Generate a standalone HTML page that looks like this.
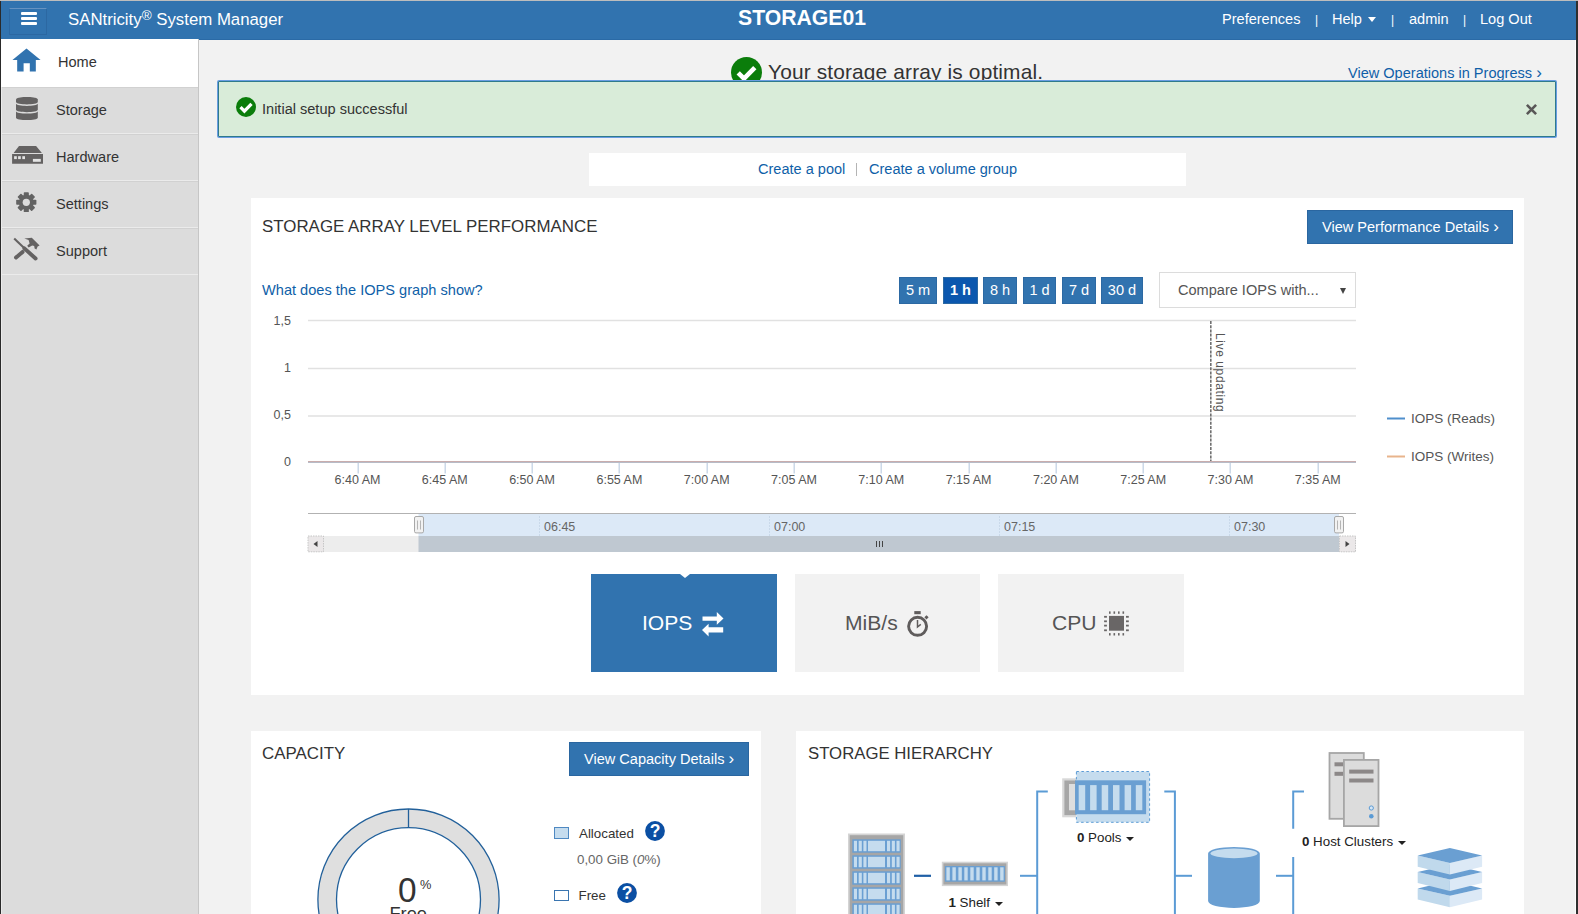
<!DOCTYPE html>
<html lang="en">
<head>
<meta charset="utf-8">
<title>SANtricity System Manager</title>
<style>
*{box-sizing:border-box;margin:0;padding:0}
html,body{width:1578px;height:914px;overflow:hidden;background:#f2f2f2;font-family:"Liberation Sans",sans-serif;color:#333;font-size:14px}
.abs{position:absolute}
#frame-top{left:0;top:0;width:1578px;height:1px;background:#bdbdbd}
#frame-left{left:0;top:1px;width:1px;height:913px;background:#2a2a2a}
#frame-right{left:1576px;top:1px;width:2px;height:913px;background:#2f2f2f}
#frame-right-w{left:1575px;top:40px;width:1px;height:874px;background:#fdfdfd}
#hdr{left:1px;top:1px;width:1575px;height:39px;background:#3173af;color:#fff}
#hdr-line{left:199px;top:39px;width:1376px;height:1px;background:#2a6aa6}
#burger{left:8px;top:7px;width:38px;height:27px;border:1px solid #2c68a2;border-top-color:#6592c1}
#burger i{position:absolute;left:11px;width:16px;height:3px;background:#fff;border-radius:1px}
#brand{left:67px;top:9px;font-size:16.8px;white-space:nowrap}
#brand sup{font-size:13.5px;position:relative;top:-5px;vertical-align:baseline;line-height:0}
#sysname{left:737px;top:5px;font-size:21.2px;font-weight:bold;white-space:nowrap}
.hl{top:10px;font-size:14.55px;white-space:nowrap}
.sep{top:12px;font-size:12px}
#side{left:1px;top:39px;width:197px;height:875px;background:#dcdcdc}
#side-b{left:198px;top:39px;width:1px;height:875px;background:#c6c6c6}
.nav{left:0;width:197px;height:47px;border-bottom:1px solid #ebebeb;border-top:1px solid #d1d1d1;font-size:14.55px;color:#333}
.nav span{position:absolute;left:55px;top:14px}
.nav.on{background:#fff;border-color:#fff;height:48px}
.nav svg{position:absolute}
.link{color:#0f5fa8}
.panel{background:#fff}
.ptitle{font-size:16.9px;color:#333;letter-spacing:0px;white-space:nowrap}
.btn{background:#3173af;color:#fff;font-size:14.55px;white-space:nowrap;border:1px solid #2a66a0}
.tb{top:277px;height:27px;background:#3173af;color:#fff;font-size:14.55px;text-align:center;line-height:26.6px;white-space:nowrap;box-shadow:inset 0 0 0 1px #2c69a3}
.hl2{font-size:13.33px;color:#222;white-space:nowrap}
.car{display:inline-block;width:0;height:0;border-left:4px solid transparent;border-right:4px solid transparent;border-top:4.5px solid #222;margin-left:5px;vertical-align:1px}
.lg{font-size:13.33px;color:#333;white-space:nowrap}
.tabt{font-size:21.1px;color:#555;white-space:nowrap}
.chev{font-size:17px}
.ax{font-size:12.5px;fill:#555;font-family:"Liberation Sans",sans-serif}
</style>
</head>
<body>
<!-- header -->
<div class="abs" id="hdr">
  <div class="abs" id="burger"><i style="top:3px"></i><i style="top:8px"></i><i style="top:13px"></i></div>
  <div class="abs" id="brand">SANtricity<sup>®</sup> System Manager</div>
  <div class="abs" id="sysname">STORAGE01</div>
  <div class="abs hl" style="left:1221px">Preferences</div>
  <div class="abs sep" style="left:1314px">|</div>
  <div class="abs hl" style="left:1331px">Help</div>
  <div class="abs" style="left:1367px;top:16px;width:0;height:0;border-left:4px solid transparent;border-right:4px solid transparent;border-top:5px solid #fff"></div>
  <div class="abs sep" style="left:1390px">|</div>
  <div class="abs hl" style="left:1408px">admin</div>
  <div class="abs sep" style="left:1462px">|</div>
  <div class="abs hl" style="left:1479px">Log Out</div>
</div>
<div class="abs" id="hdr-line"></div>

<!-- sidebar -->
<div class="abs" id="side">
  <div class="abs nav on" style="top:0"><span style="left:57px;top:14px">Home</span>
    <svg style="left:11px;top:8.2px" width="29" height="24" viewBox="0 0 28 24" preserveAspectRatio="none"><path fill="#3173af" d="M14 0.6 L27.6 12 H23 V23.4 H17.2 V15.2 H11.2 V23.4 H5 V12 H0.4 Z"/></svg>
  </div>
  <div class="abs nav" style="top:48px"><span style="top:13.5px">Storage</span>
    <svg style="left:14.7px;top:8.5px" width="22" height="24" viewBox="0 0 22 24"><g fill="#646262"><path d="M0 2.6 C0 -0.9 21.8 -0.9 21.8 2.6 V5.1 C21.8 8.3 0 8.3 0 5.1 Z"/><path d="M0 6.5 C0 9.7 21.8 9.7 21.8 6.5 V12.8 C21.8 16.0 0 16.0 0 12.8 Z"/><path d="M0 14.2 C0 17.4 21.8 17.4 21.8 14.2 V20.7 C21.8 23.9 0 23.9 0 20.7 Z"/></g></svg>
  </div>
  <div class="abs nav" style="top:95px"><span>Hardware</span>
    <svg style="left:11px;top:11px" width="32" height="19" viewBox="0 0 32 19"><path fill="#646262" d="M7 0.1 H24.1 L29.9 6.9 H1.6 Z M0.1 7.9 H31 V17.8 H0.1 Z"/><g fill="#e4e4e4"><rect x="2.1" y="10.2" width="2.7" height="2.9"/><rect x="6.1" y="10.2" width="2.7" height="2.9"/><rect x="10.3" y="10.2" width="2.7" height="2.9"/><rect x="20.9" y="12.9" width="7.9" height="2.9"/></g></svg>
  </div>
  <div class="abs nav" style="top:142px"><span>Settings</span>
    <svg style="left:15.2px;top:9.7px" width="20.6" height="20.6" viewBox="-10.5 -10.5 21 21"><g fill="#636363"><g id="teeth"><rect x="-2.6" y="-10.3" width="5.2" height="20.6" rx="0.8"/><rect x="-2.6" y="-10.3" width="5.2" height="20.6" rx="0.8" transform="rotate(45)"/><rect x="-2.6" y="-10.3" width="5.2" height="20.6" rx="0.8" transform="rotate(90)"/><rect x="-2.6" y="-10.3" width="5.2" height="20.6" rx="0.8" transform="rotate(135)"/></g><circle r="7.6"/></g><circle r="3.7" fill="#dcdcdc"/></svg>
  </div>
  <div class="abs nav" style="top:189px"><span>Support</span>
    <svg style="left:12px;top:8px" width="28" height="25" viewBox="0 0 28 25"><g fill="none" stroke="#646262"><path d="M1.2 1.6 L10.6 10.6" stroke-width="2.1"/><path d="M11.4 11.4 L22.6 21.5" stroke-width="3.9" stroke-linecap="round"/><path d="M3 20.6 L9.6 14.9" stroke-width="3.9" stroke-linecap="round"/></g><path fill="#646262" d="M11.3 1.5 L18.8 0.8 L26.6 8.6 L24.6 9.6 L23.4 12.4 L21.6 11.4 L21.2 9 L19.2 8.4 L15.6 10.6 L14.2 8.8 L16.6 6.4 L15.6 2.9 Z"/></svg>
  </div>
</div>
<div class="abs" id="side-b"></div>
<div class="abs" style="left:1px;top:87px;width:1px;height:827px;background:#ebebeb"></div>

<!-- status -->
<div class="abs" id="status" style="left:768px;top:60px;font-size:20.9px;letter-spacing:0.14px;color:#333;white-space:nowrap">Your storage array is optimal.</div>
<div class="abs link" id="ops" style="left:1348px;top:63px;font-size:14.55px;white-space:nowrap">View Operations in Progress <span class="chev">›</span></div>

<svg class="abs" id="chk2" style="left:731px;top:57px" width="31" height="24" viewBox="0 0 31 24"><circle cx="15.5" cy="15.5" r="15.5" fill="#0b7d0b"/><path d="M7.2 15.8 L13 21.6 L23.8 10.6" fill="none" stroke="#fff" stroke-width="4.6"/></svg>
<!-- notification -->
<div class="abs" id="notif" style="left:218px;top:81px;width:1338px;height:56px;background:#d9ecd9;border:1px solid #2f7a8c;box-shadow:0 0 0 1px #6a9de2;border-radius:1px">
  <div class="abs" style="left:43px;top:19px;font-size:14.55px;color:#333;white-space:nowrap">Initial setup successful</div>
  <svg class="abs" style="left:1306px;top:20.5px" width="13" height="13" viewBox="0 0 13 13"><path d="M1.9 1.9 L11.1 11.1 M11.1 1.9 L1.9 11.1" stroke="#595757" stroke-width="2.6" fill="none"/></svg>
</div>

<svg class="abs" id="chk1" style="left:236px;top:97px" width="20" height="20" viewBox="0 0 20 20"><circle cx="10" cy="10" r="10" fill="#0b7d0b"/><path d="M4.5 10.2 L8.4 14.1 L15.5 6.8" fill="none" stroke="#fff" stroke-width="3.3"/></svg>
<!-- create links -->
<div class="abs panel" id="links" style="left:589px;top:153px;width:597px;height:33px">
  <div class="abs link" style="left:169px;top:7.6px;font-size:14.55px;white-space:nowrap">Create a pool</div>
  <div class="abs" style="left:267px;top:10px;width:1px;height:13px;background:#b4b4b4"></div>
  <div class="abs link" style="left:280px;top:7.6px;font-size:14.55px;white-space:nowrap">Create a volume group</div>
</div>

<!-- performance panel -->
<div class="abs panel" id="perf" style="left:251px;top:198px;width:1273px;height:497px"></div>
<div class="abs ptitle" id="t-perf" style="left:262px;top:217px">STORAGE ARRAY LEVEL PERFORMANCE</div>
<div class="abs btn" id="b-perf" style="left:1307px;top:210px;width:206px;height:34px;line-height:32px;padding-left:14px">View Performance Details <span class="chev">›</span></div>
<div class="abs link" id="q-iops" style="left:262px;top:282px;font-size:14.6px;white-space:nowrap">What does the IOPS graph show?</div>
<div class="abs tb" style="left:899px;width:38px">5 m</div>
<div class="abs tb" style="left:943px;width:35px;background:#0b57ae;font-weight:bold">1 h</div>
<div class="abs tb" style="left:983px;width:34px">8 h</div>
<div class="abs tb" style="left:1023px;width:33px">1 d</div>
<div class="abs tb" style="left:1062px;width:34px">7 d</div>
<div class="abs tb" style="left:1101px;width:42px">30 d</div>
<div class="abs" id="sel" style="left:1159px;top:272px;width:197px;height:36px;background:#fff;border:1px solid #dcdcdc;font-size:14.55px;color:#555;line-height:34px;padding-left:18px;white-space:nowrap">Compare IOPS with...<i style="position:absolute;left:180px;top:14.5px;width:0;height:0;border-left:3.8px solid transparent;border-right:3.8px solid transparent;border-top:6.5px solid #444"></i></div>
<svg class="abs" id="chart" style="left:0;top:0" width="1578" height="914" viewBox="0 0 1578 914">
<path d="M308 320.6 H1356" stroke="#e1e1e1" stroke-width="1.5"/>
<path d="M308 368.4 H1356" stroke="#e1e1e1" stroke-width="1.5"/>
<path d="M308 415.9 H1356" stroke="#e1e1e1" stroke-width="1.5"/>
<path d="M358.2 463 V473.4" stroke="#c3d2e4" stroke-width="1.3"/>
<path d="M445.2 463 V473.4" stroke="#c3d2e4" stroke-width="1.3"/>
<path d="M532.2 463 V473.4" stroke="#c3d2e4" stroke-width="1.3"/>
<path d="M619.2 463 V473.4" stroke="#c3d2e4" stroke-width="1.3"/>
<path d="M707.2 463 V473.4" stroke="#c3d2e4" stroke-width="1.3"/>
<path d="M794.2 463 V473.4" stroke="#c3d2e4" stroke-width="1.3"/>
<path d="M881.2 463 V473.4" stroke="#c3d2e4" stroke-width="1.3"/>
<path d="M969.2 463 V473.4" stroke="#c3d2e4" stroke-width="1.3"/>
<path d="M1056.2 463 V473.4" stroke="#c3d2e4" stroke-width="1.3"/>
<path d="M1143.2 463 V473.4" stroke="#c3d2e4" stroke-width="1.3"/>
<path d="M1230.2 463 V473.4" stroke="#c3d2e4" stroke-width="1.3"/>
<path d="M1318.2 463 V473.4" stroke="#c3d2e4" stroke-width="1.3"/>
<path d="M308 461.5 H1356" stroke="#c9adad" stroke-width="1"/><path d="M308 462.5 H1356" stroke="#b7bcc8" stroke-width="1"/>
<path d="M1210.8 321 V461" stroke="#707070" stroke-width="1.6" stroke-dasharray="3 1.2"/>
<text class="ax" transform="translate(1215.5 333) rotate(90)" style="font-size:12px;letter-spacing:0.6px;fill:#555">Live updating</text>
<text class="ax" x="291" y="325" text-anchor="end">1,5</text>
<text class="ax" x="291" y="372" text-anchor="end">1</text>
<text class="ax" x="291" y="419" text-anchor="end">0,5</text>
<text class="ax" x="291" y="466" text-anchor="end">0</text>
<text class="ax" x="357.5" y="484" text-anchor="middle">6:40 AM</text>
<text class="ax" x="444.8" y="484" text-anchor="middle">6:45 AM</text>
<text class="ax" x="532.1" y="484" text-anchor="middle">6:50 AM</text>
<text class="ax" x="619.4" y="484" text-anchor="middle">6:55 AM</text>
<text class="ax" x="706.7" y="484" text-anchor="middle">7:00 AM</text>
<text class="ax" x="794.0" y="484" text-anchor="middle">7:05 AM</text>
<text class="ax" x="881.3" y="484" text-anchor="middle">7:10 AM</text>
<text class="ax" x="968.6" y="484" text-anchor="middle">7:15 AM</text>
<text class="ax" x="1055.9" y="484" text-anchor="middle">7:20 AM</text>
<text class="ax" x="1143.1999999999998" y="484" text-anchor="middle">7:25 AM</text>
<text class="ax" x="1230.5" y="484" text-anchor="middle">7:30 AM</text>
<text class="ax" x="1317.8" y="484" text-anchor="middle">7:35 AM</text>
<path d="M1387 418.5 H1405" stroke="#4f8fcc" stroke-width="2"/>
<path d="M1387 456.5 H1405" stroke="#e8b48c" stroke-width="2"/>
<text class="ax" x="1411" y="423" style="font-size:13.5px;fill:#555">IOPS (Reads)</text>
<text class="ax" x="1411" y="461" style="font-size:13.5px;fill:#555">IOPS (Writes)</text>
<rect x="418.5" y="514" width="920.5" height="22" fill="#dce9f7"/>
<path d="M308 513.5 H1356" stroke="#b2b2b2" stroke-width="1.2"/>
<path d="M539.5 516 V536" stroke="#c9d9ea" stroke-width="1" stroke-dasharray="2 1"/>
<text class="ax" x="544" y="531" style="fill:#666">06:45</text>
<path d="M769.5 516 V536" stroke="#c9d9ea" stroke-width="1" stroke-dasharray="2 1"/>
<text class="ax" x="774" y="531" style="fill:#666">07:00</text>
<path d="M999.5 516 V536" stroke="#c9d9ea" stroke-width="1" stroke-dasharray="2 1"/>
<text class="ax" x="1004" y="531" style="fill:#666">07:15</text>
<path d="M1229.5 516 V536" stroke="#c9d9ea" stroke-width="1" stroke-dasharray="2 1"/>
<text class="ax" x="1234" y="531" style="fill:#666">07:30</text>
<rect x="308" y="536" width="1048" height="16" fill="#ededed"/>
<rect x="418.5" y="536" width="920.5" height="16" fill="#bfc8d1"/>
<rect x="308" y="536" width="15.5" height="15.8" fill="#ebe8e9" stroke="#c6c6c6" stroke-dasharray="1.5 1"/>
<rect x="1339.5" y="536" width="16" height="15.8" fill="#ebe8e9" stroke="#c6c6c6" stroke-dasharray="1.5 1"/>
<path d="M317.5 541 L313.5 544 L317.5 547 Z" fill="#444"/>
<path d="M1345.5 541 L1349.5 544 L1345.5 547 Z" fill="#444"/>

<path d="M876.5 541 V547 M879.5 541 V547 M882.5 541 V547" stroke="#444" stroke-width="1"/>
<rect x="414.5" y="516.5" width="9" height="16.4" rx="1.5" fill="#f2f2f2" stroke="#a8a8a8"/>
<path d="M417.5 520.5 V529.5 M420.5 520.5 V529.5" stroke="#b5b5b5" stroke-width="1"/>
<rect x="1334.5" y="516.5" width="9" height="16.4" rx="1.5" fill="#f2f2f2" stroke="#a8a8a8"/>
<path d="M1337.5 520.5 V529.5 M1340.5 520.5 V529.5" stroke="#b5b5b5" stroke-width="1"/>
</svg>
<div class="abs" id="tab1" style="left:591px;top:574px;width:186px;height:98px;background:#3173af"></div>
<div class="abs" style="left:679.5px;top:574px;width:0;height:0;border-left:5px solid transparent;border-right:5px solid transparent;border-top:4.4px solid #fff"></div>
<div class="abs" id="tab2" style="left:795px;top:574px;width:185px;height:98px;background:#f2f2f2"></div>
<div class="abs" id="tab3" style="left:998px;top:574px;width:186px;height:98px;background:#f2f2f2"></div>
<svg class="abs" id="ic-ex" style="left:700px;top:610px" width="26" height="28" viewBox="700 610 26 28"><g fill="#fff"><path d="M702.5 616.4 H716.8 V612 L723.5 618.5 L716.8 624.8 V620.8 H702.5 Z"/><path d="M723.2 627.2 H708.6 V623.8 L702 629.9 L708.6 636.6 V632.4 H723.2 Z"/></g></svg>
<svg class="abs" id="ic-sw" style="left:905px;top:609px" width="26" height="30" viewBox="905 609 26 30"><circle cx="917.6" cy="626.3" r="9" fill="none" stroke="#5f5c5c" stroke-width="2.9"/><rect x="914.3" y="611.1" width="6.4" height="3.1" fill="#5f5c5c"/><path d="M926.5 615.2 L928.6 617.3 L926.5 619.4 L924.4 617.3 Z" fill="#5f5c5c"/><path d="M917.5 620 V627 L920.8 624.4" fill="none" stroke="#5f5c5c" stroke-width="1.5"/></svg>
<svg class="abs" id="ic-cpu" style="left:1102px;top:609px" width="30" height="30" viewBox="1102 609 30 30"><g fill="#696666"><rect x="1109" y="615.9" width="15" height="14.8"/><rect x="1109" y="611.4" width="1.6" height="2.4"/><rect x="1109" y="633.1" width="1.6" height="2.4"/><rect x="1113.5" y="611.4" width="1.6" height="2.4"/><rect x="1113.5" y="633.1" width="1.6" height="2.4"/><rect x="1118" y="611.4" width="1.6" height="2.4"/><rect x="1118" y="633.1" width="1.6" height="2.4"/><rect x="1122.5" y="611.4" width="1.6" height="2.4"/><rect x="1122.5" y="633.1" width="1.6" height="2.4"/><rect x="1104.1" y="615.9" width="2.8" height="1.8"/><rect x="1126" y="615.9" width="2.8" height="1.8"/><rect x="1104.1" y="620.4" width="2.8" height="1.8"/><rect x="1126" y="620.4" width="2.8" height="1.8"/><rect x="1104.1" y="624.7" width="2.8" height="1.8"/><rect x="1126" y="624.7" width="2.8" height="1.8"/><rect x="1104.1" y="629.4" width="2.8" height="1.8"/><rect x="1126" y="629.4" width="2.8" height="1.8"/></g></svg>
<div class="abs tabt" id="tt1" style="left:642px;top:611px;color:#fff">IOPS</div>
<div class="abs tabt" id="tt2" style="left:845px;top:611px">MiB/s</div>
<div class="abs tabt" id="tt3" style="left:1052px;top:611px">CPU</div>


<!-- capacity panel -->
<div class="abs panel" id="cap" style="left:251px;top:731px;width:510px;height:183px"></div>
<div class="abs ptitle" id="t-cap" style="left:262px;top:744px">CAPACITY</div>
<div class="abs btn" id="b-cap" style="left:569px;top:742px;width:180px;height:34px;line-height:32px;padding-left:14px">View Capacity Details <span class="chev">›</span></div>
<svg class="abs" id="donut" style="left:308px;top:800px" width="200" height="114" viewBox="308 800 200 114">
  <circle cx="408.5" cy="899.6" r="81.5" fill="none" stroke="#dfdfdf" stroke-width="18"/>
  <circle cx="408.5" cy="899.6" r="90.6" fill="none" stroke="#22609a" stroke-width="1.3"/>
  <circle cx="408.5" cy="899.6" r="72" fill="none" stroke="#22609a" stroke-width="1.3"/>
  <path d="M408.5 809 V827.6" stroke="#22609a" stroke-width="1.3"/>
</svg>
<div class="abs" id="zero" style="left:398px;top:870.3px;font-size:35.5px;color:#333;line-height:40px;transform:scaleX(0.94);transform-origin:0 0">0</div>
<div class="abs" id="pct" style="left:420px;top:877px;font-size:12.8px;color:#333">%</div>
<div class="abs" id="freebig" style="left:389.5px;top:903.5px;font-size:18.2px;color:#333;white-space:nowrap">Free</div>
<div class="abs" style="left:554px;top:827px;width:15px;height:12px;background:#c5dcee;border:1px solid #4f89c2"></div>
<div class="abs lg" id="lg1" style="left:579px;top:826px">Allocated</div>
<div class="abs" id="lgv" style="left:577px;top:851.6px;font-size:13.33px;color:#666;white-space:nowrap">0,00 GiB (<i>0</i>%)</div>
<div class="abs" style="left:554px;top:890px;width:15px;height:11px;background:#fff;border:1px solid #3a75b0"></div>
<div class="abs lg" id="lg2" style="left:578.5px;top:888px">Free</div>
<svg class="abs" style="left:645px;top:821px" width="20" height="20" viewBox="0 0 20 20"><circle cx="10" cy="10" r="9.9" fill="#0b4fa3"/><text x="10" y="16.4" text-anchor="middle" font-family="Liberation Sans, sans-serif" font-weight="bold" font-size="17.5" fill="#fff">?</text></svg>
<svg class="abs" style="left:617px;top:883px" width="20" height="20" viewBox="0 0 20 20"><circle cx="10" cy="10" r="9.9" fill="#0b4fa3"/><text x="10" y="16.4" text-anchor="middle" font-family="Liberation Sans, sans-serif" font-weight="bold" font-size="17.5" fill="#fff">?</text></svg>


<!-- hierarchy panel -->
<div class="abs panel" id="hier" style="left:796px;top:731px;width:728px;height:183px"></div>
<div class="abs ptitle" id="t-hier" style="left:808px;top:744px;font-size:16.75px">STORAGE HIERARCHY</div>
<svg class="abs" id="hsvg" style="left:796px;top:731px" width="728" height="183" viewBox="796 731 728 183">
<rect x="848" y="833.5" width="57" height="90" fill="#d4d4d4"/>
<rect x="849.7" y="835.2" width="53.6" height="90" fill="#a6a6a6"/>
<rect x="852.3" y="839.3" width="48.4" height="13.4" fill="#6a9fd2"/>
<rect x="853.9" y="840.8" width="3.1" height="10.4" fill="#c5dcee"/>
<rect x="858.7" y="840.8" width="3.1" height="10.4" fill="#c5dcee"/>
<rect x="863.4" y="840.8" width="3.1" height="10.4" fill="#c5dcee"/>
<rect x="868" y="840.8" width="17" height="10.4" fill="#c5dcee"/>
<rect x="887" y="840.8" width="3.1" height="10.4" fill="#c5dcee"/>
<rect x="891.8" y="840.8" width="3.1" height="10.4" fill="#c5dcee"/>
<rect x="896.5" y="840.8" width="3.1" height="10.4" fill="#c5dcee"/>
<rect x="852.3" y="855.3" width="48.4" height="13.4" fill="#6a9fd2"/>
<rect x="853.9" y="856.8" width="3.1" height="10.4" fill="#c5dcee"/>
<rect x="858.7" y="856.8" width="3.1" height="10.4" fill="#c5dcee"/>
<rect x="863.4" y="856.8" width="3.1" height="10.4" fill="#c5dcee"/>
<rect x="868" y="856.8" width="17" height="10.4" fill="#c5dcee"/>
<rect x="887" y="856.8" width="3.1" height="10.4" fill="#c5dcee"/>
<rect x="891.8" y="856.8" width="3.1" height="10.4" fill="#c5dcee"/>
<rect x="896.5" y="856.8" width="3.1" height="10.4" fill="#c5dcee"/>
<rect x="852.3" y="871.3" width="48.4" height="13.4" fill="#6a9fd2"/>
<rect x="853.9" y="872.8" width="3.1" height="10.4" fill="#c5dcee"/>
<rect x="858.7" y="872.8" width="3.1" height="10.4" fill="#c5dcee"/>
<rect x="863.4" y="872.8" width="3.1" height="10.4" fill="#c5dcee"/>
<rect x="868" y="872.8" width="17" height="10.4" fill="#c5dcee"/>
<rect x="887" y="872.8" width="3.1" height="10.4" fill="#c5dcee"/>
<rect x="891.8" y="872.8" width="3.1" height="10.4" fill="#c5dcee"/>
<rect x="896.5" y="872.8" width="3.1" height="10.4" fill="#c5dcee"/>
<rect x="852.3" y="887.3" width="48.4" height="13.4" fill="#6a9fd2"/>
<rect x="853.9" y="888.8" width="3.1" height="10.4" fill="#c5dcee"/>
<rect x="858.7" y="888.8" width="3.1" height="10.4" fill="#c5dcee"/>
<rect x="863.4" y="888.8" width="3.1" height="10.4" fill="#c5dcee"/>
<rect x="868" y="888.8" width="17" height="10.4" fill="#c5dcee"/>
<rect x="887" y="888.8" width="3.1" height="10.4" fill="#c5dcee"/>
<rect x="891.8" y="888.8" width="3.1" height="10.4" fill="#c5dcee"/>
<rect x="896.5" y="888.8" width="3.1" height="10.4" fill="#c5dcee"/>
<rect x="852.3" y="903.3" width="48.4" height="13.4" fill="#6a9fd2"/>
<rect x="853.9" y="904.8" width="3.1" height="10.4" fill="#c5dcee"/>
<rect x="858.7" y="904.8" width="3.1" height="10.4" fill="#c5dcee"/>
<rect x="863.4" y="904.8" width="3.1" height="10.4" fill="#c5dcee"/>
<rect x="868" y="904.8" width="17" height="10.4" fill="#c5dcee"/>
<rect x="887" y="904.8" width="3.1" height="10.4" fill="#c5dcee"/>
<rect x="891.8" y="904.8" width="3.1" height="10.4" fill="#c5dcee"/>
<rect x="896.5" y="904.8" width="3.1" height="10.4" fill="#c5dcee"/>
<path d="M914 875.8 H931" stroke="#1f5fa6" stroke-width="2.2"/>
<rect x="941.8" y="861.7" width="66.2" height="24.4" fill="#d4d4d4"/>
<rect x="943.4" y="863.3" width="63" height="21.2" fill="#a6a6a6"/>
<rect x="944.9" y="866" width="60" height="15.7" fill="#6a9fd2"/>
<rect x="946.4" y="867.3" width="3.4" height="13.1" fill="#c5dcee"/>
<rect x="952.4" y="867.3" width="3.4" height="13.1" fill="#c5dcee"/>
<rect x="958.4" y="867.3" width="3.4" height="13.1" fill="#c5dcee"/>
<rect x="964.3" y="867.3" width="3.4" height="13.1" fill="#c5dcee"/>
<rect x="970.3" y="867.3" width="3.4" height="13.1" fill="#c5dcee"/>
<rect x="976.3" y="867.3" width="3.4" height="13.1" fill="#c5dcee"/>
<rect x="982.3" y="867.3" width="3.4" height="13.1" fill="#c5dcee"/>
<rect x="988.3" y="867.3" width="3.4" height="13.1" fill="#c5dcee"/>
<rect x="994.2" y="867.3" width="3.4" height="13.1" fill="#c5dcee"/>
<rect x="1000.2" y="867.3" width="3.4" height="13.1" fill="#c5dcee"/>
<g fill="none" stroke="#5b9bd5" stroke-width="2">
<path d="M1020 875.8 H1037"/>
<path d="M1047.8 791.6 H1037.2 V920"/>
<path d="M1164.3 791.6 H1174.9 V920"/>
<path d="M1175 875.8 H1192"/>
<path d="M1276 875.8 H1293"/>
<path d="M1304 791.6 H1293.2 V828.7"/>
<path d="M1293.2 857 V920"/>
</g>
<rect x="1062.2" y="778.3" width="14" height="39" fill="#d8d8d8"/>
<rect x="1064.4" y="780.5" width="12" height="34.6" fill="#a6a6a6"/>
<rect x="1069" y="784" width="6" height="26.3" fill="#dedede"/>
<rect x="1076.4" y="771.5" width="73.2" height="50.8" fill="#c5dcee" stroke="#5b9bd5" stroke-width="1" stroke-dasharray="2.5 2.5"/>
<rect x="1075.1" y="780.3" width="71" height="33.9" fill="#6a9fd2"/>
<rect x="1078.7" y="785.1" width="6.5" height="25.1" fill="#c5dcee"/>
<rect x="1090.1" y="785.1" width="6.5" height="25.1" fill="#c5dcee"/>
<rect x="1101.7" y="785.1" width="6.5" height="25.1" fill="#c5dcee"/>
<rect x="1113" y="785.1" width="6.5" height="25.1" fill="#c5dcee"/>
<rect x="1124.6" y="785.1" width="6.5" height="25.1" fill="#c5dcee"/>
<rect x="1135.8" y="785.1" width="6.5" height="25.1" fill="#c5dcee"/>
<path d="M1208.1 853.5 A25.85 6.6 0 0 1 1259.8 853.5 V901 A25.85 6.9 0 0 1 1208.1 901 Z" fill="#6a9fd2"/>
<ellipse cx="1234" cy="853.4" rx="23.5" ry="4.8" fill="#c5dcee"/>
<rect x="1329.5" y="753.0" width="34.300000000000004" height="65.8" fill="#dcdcdc" stroke="#a6a6a6" stroke-width="1.8"/>
<rect x="1334.5" y="762.3" width="24" height="4" fill="#8c8888"/>
<rect x="1334.5" y="771.8" width="24" height="4" fill="#8c8888"/>
<rect x="1343.9" y="759.9" width="34.6" height="66.2" fill="#dcdcdc" stroke="#a6a6a6" stroke-width="1.8"/>
<rect x="1349.2" y="769.6" width="24.3" height="4" fill="#8c8888"/>
<rect x="1349.2" y="778.5" width="24.3" height="4" fill="#8c8888"/>
<circle cx="1371.3" cy="808" r="2.1" fill="#d6e6f5" stroke="#5b9bd5" stroke-width="1"/>
<circle cx="1371.3" cy="816.2" r="2.3" fill="#5b9bd5"/>
<path d="M1417.7 888.4 L1449.9 895.8 V907.3 L1417.7 899.5 Z" fill="#c0d9ec"/>
<path d="M1482.1 888.4 L1449.9 895.8 V907.3 L1482.1 899.5 Z" fill="#dce9f6"/>
<path d="M1449.9 880.8 L1482.1 888.4 L1449.9 895.8 L1417.7 888.4 Z" fill="#6a9fd2"/>
<path d="M1417.7 872.0 L1449.9 879.4 V890.9 L1417.7 883.1 Z" fill="#c0d9ec"/>
<path d="M1482.1 872.0 L1449.9 879.4 V890.9 L1482.1 883.1 Z" fill="#dce9f6"/>
<path d="M1449.9 864.4 L1482.1 872.0 L1449.9 879.4 L1417.7 872.0 Z" fill="#6a9fd2"/>
<path d="M1417.7 855.6 L1449.9 863.0 V874.5 L1417.7 866.7 Z" fill="#c0d9ec"/>
<path d="M1482.1 855.6 L1449.9 863.0 V874.5 L1482.1 866.7 Z" fill="#dce9f6"/>
<path d="M1449.9 848.0 L1482.1 855.6 L1449.9 863.0 L1417.7 855.6 Z" fill="#6a9fd2"/>
</svg>
<div class="abs hl2" id="h-shelf" style="left:948.5px;top:894.5px"><b>1</b> Shelf<i class="car"></i></div>
<div class="abs hl2" id="h-pools" style="left:1077px;top:829.5px"><b>0</b> Pools<i class="car"></i></div>
<div class="abs hl2" id="h-hc" style="left:1302px;top:834px"><b>0</b> Host Clusters<i class="car"></i></div>


<!-- frame -->
<div class="abs" id="frame-top"></div>
<div class="abs" id="frame-left"></div>
<div class="abs" id="frame-right-w"></div>
<div class="abs" id="frame-right"></div>
</body>
</html>
